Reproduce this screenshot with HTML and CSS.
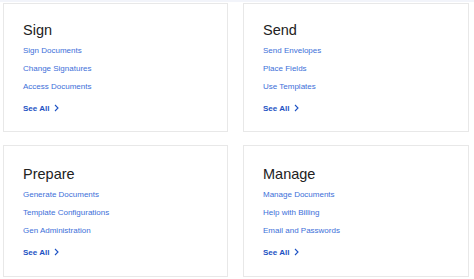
FILE: index.html
```html
<!DOCTYPE html>
<html>
<head>
    <meta charset="utf-8" />
    <title>Help Topics</title>
    <link rel="stylesheet" href="styles.css">
</head>
<body>
<div class="topbar"></div>
<div class="topics">
    <div class="card">
        <h2>Sign</h2>
        <ul>
            <li><a href="#">Sign Documents</a></li>
            <li><a href="#">Change Signatures</a></li>
            <li><a href="#">Access Documents</a></li>
        </ul>
        <a class="see-all" href="#">See All <svg width="5" height="8" viewBox="0 0 5 8"><polyline points="1,1 4,4 1,7" /></svg></a>
    </div>
    <div class="card">
        <h2>Send</h2>
        <ul>
            <li><a href="#">Send Envelopes</a></li>
            <li><a href="#">Place Fields</a></li>
            <li><a href="#">Use Templates</a></li>
        </ul>
        <a class="see-all" href="#">See All <svg width="5" height="8" viewBox="0 0 5 8"><polyline points="1,1 4,4 1,7" /></svg></a>
    </div>
    <div class="card">
        <h2>Prepare</h2>
        <ul>
            <li><a href="#">Generate Documents</a></li>
            <li><a href="#">Template Configurations</a></li>
            <li><a href="#">Gen Administration</a></li>
        </ul>
        <a class="see-all" href="#">See All <svg width="5" height="8" viewBox="0 0 5 8"><polyline points="1,1 4,4 1,7" /></svg></a>
    </div>
    <div class="card">
        <h2>Manage</h2>
        <ul>
            <li><a href="#">Manage Documents</a></li>
            <li><a href="#">Help with Billing</a></li>
            <li><a href="#">Email and Passwords</a></li>
        </ul>
        <a class="see-all" href="#">See All <svg width="5" height="8" viewBox="0 0 5 8"><polyline points="1,1 4,4 1,7" /></svg></a>
    </div>
</div>
</body>
</html>
```
FILE: styles.css
```css
body {
    margin: 0;
    background: #fff;
    font-family: "Liberation Sans", Arial, sans-serif;
    color: #222;
}
.topbar {
    height: 2px;
    background: #f2f4fa;
}
.topics {
    display: grid;
    grid-template-columns: 225px 226px;
    grid-template-rows: 129px 132px;
    column-gap: 15px;
    row-gap: 13px;
    padding: 1px 7px 0 3px;
}
.card {
    box-sizing: border-box;
    border: 1px solid #e8e8e8;
    padding: 18px 19px 12px;
}
.card:nth-child(n+3) {
    padding-top: 20px;
}
h2 {
    margin: 0;
    font-size: 14.5px;
    line-height: 17px;
    font-weight: normal;
    color: #222;
}
ul {
    list-style: none;
    margin: 3px 0 0;
    padding: 0;
}
li {
    font-size: 8px;
    line-height: 18px;
}
a {
    color: #3d6fd9;
    text-decoration: none;
}
.see-all {
    display: block;
    margin-top: 4px;
    font-size: 8px;
    line-height: 18px;
    font-weight: bold;
    color: #1d52c4;
}
.see-all svg {
    margin-left: 2px;
    vertical-align: -1px;
}
.see-all polyline {
    fill: none;
    stroke: #1d52c4;
    stroke-width: 1.1;
}
```
